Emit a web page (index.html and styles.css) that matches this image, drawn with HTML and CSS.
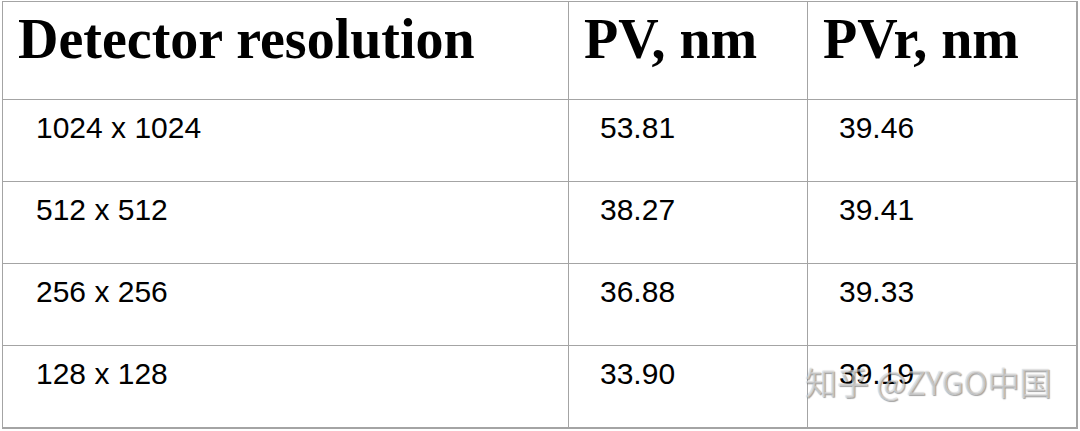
FILE: index.html
```html
<!DOCTYPE html>
<html lang="en">
<head>
  <meta charset="UTF-8">
  <title>Detector resolution</title>
  <link rel="stylesheet" href="styles.css">
</head>
<body>

  <div class="sheet">
    <table class="results">
      <colgroup>
        <col class="col-res">
        <col class="col-pv">
        <col class="col-pvr">
      </colgroup>
      <tr class="head-row">
        <th>Detector resolution</th>
        <th>PV, nm</th>
        <th>PVr, nm</th>
      </tr>
      <tr>
        <td>1024 x 1024</td>
        <td class="num">53.81</td>
        <td class="num">39.46</td>
      </tr>
      <tr>
        <td>512 x 512</td>
        <td class="num">38.27</td>
        <td class="num">39.41</td>
      </tr>
      <tr>
        <td>256 x 256</td>
        <td class="num">36.88</td>
        <td class="num">39.33</td>
      </tr>
      <tr>
        <td>128 x 128</td>
        <td class="num">33.90</td>
        <td class="num">39.19</td>
      </tr>
    </table>

    <!-- watermark -->
    <div class="watermark">知乎 @ZYGO中国</div>
  </div>

</body>
</html>
```

FILE: styles.css
```css
body {
  margin: 0;
  background-color: #ffffff;
  color: #000;
}

.sheet {
  position: relative;
  padding: 1px 0 0 2px;
}

.results {
  border-collapse: collapse;
  table-layout: fixed;
  width: 1074px;
  border-right: 2px solid #a4a4a4;
  border-bottom: 2px solid #a4a4a4;
}

.col-res { width: 566px; }
.col-pv { width: 239px; }
.col-pvr { width: 269px; }

.results th,
.results td {
  border: 1px solid #a4a4a4;
  text-align: left;
  vertical-align: top;
}

.results th {
  height: 98px;
  padding: 5px 0 0 15px;
  font-family: "Liberation Serif", "Times New Roman", serif;
  font-size: 56px;
  font-weight: bold;
  line-height: 64px;
  box-sizing: border-box;
}

.results td {
  height: 82px;
  padding: 11px 0 0 33px;
  font-family: "Liberation Sans", Arial, sans-serif;
  font-size: 30px;
  line-height: 34px;
  box-sizing: border-box;
}

.results td.num {
  padding-left: 31px;
}

.watermark {
  position: absolute;
  left: 805px;
  top: 360px;
  font-family: "Noto Sans CJK SC", "Noto Sans", sans-serif;
  font-size: 32px;
  line-height: 42px;
  color: rgba(255, 255, 255, 0.55);
  text-shadow: 1px 1px 1px rgba(0, 0, 0, 0.35), 0 0 1px rgba(0, 0, 0, 0.25);
  white-space: nowrap;
}
```
